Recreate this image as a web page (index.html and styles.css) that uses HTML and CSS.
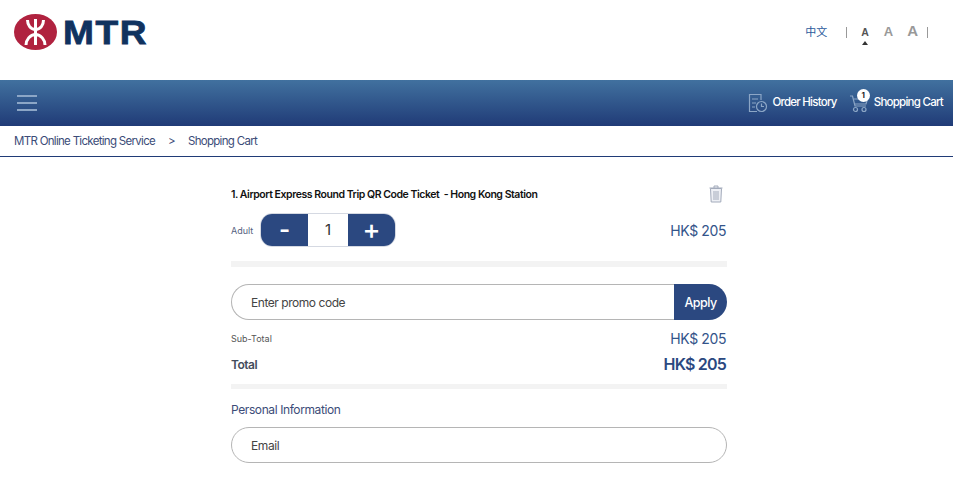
FILE: index.html
```html
<!DOCTYPE html>
<html lang="en">
<head>
<meta charset="utf-8">
<title>Shopping Cart</title>
<link rel="stylesheet" href="styles.css">
</head>
<body>
<header class="top">
  <a class="logo">
    <svg class="emblem" width="43" height="36" viewBox="0 0 43 36">
      <ellipse cx="21.500" cy="18" rx="21.500" ry="18" fill="#b0223f"/>
      <g fill="none" stroke="#fff" stroke-width="3">
        <path d="M21.500 5v26"/>
        <path d="M13.500 6c0 5 3 9.500 8 9.500s8-4.500 8-9.500"/>
        <path d="M12 31c0-5 4-10.500 9.500-10.500S31 26 31 31"/>
      </g>
    </svg>
    <span class="wordmark">MTR</span>
  </a>
  <div class="tools">
    <a class="lang">中文</a>
    <span class="sep"></span>
    <span class="size size-s">A</span>
    <span class="size size-m">A</span>
    <span class="size size-l">A</span>
    <span class="sep sep-end"></span>
  </div>
</header>
<nav class="bar">
  <div class="burger"><i></i><i></i><i></i></div>
  <div class="bar-links">
    <a class="bar-link">
      <svg width="20" height="20" viewBox="0 0 20 20" fill="none" stroke="#8ca6c6" stroke-width="1.200">
        <path d="M13 7V1.500H1.500v17H9"/>
        <path d="M4 6h6M4 10h4M4 14h3"/>
        <circle cx="13.500" cy="13.500" r="5"/>
        <path d="M13.500 10.500v3h2.500"/>
      </svg>
      <span class="bar-text">Order History</span>
    </a>
    <a class="bar-link cart">
      <svg width="20" height="20" viewBox="0 0 20 20" fill="none" stroke="#8ca6c6" stroke-width="1.200">
        <path d="M1 3h2.500l2.500 10h11"/>
        <path d="M4.500 6h14l-1.500 5H6"/>
        <circle cx="6.500" cy="16.500" r="2"/>
        <circle cx="15" cy="16.500" r="2"/>
      </svg>
      <b class="badge">1</b>
      <span class="bar-text">Shopping Cart</span>
    </a>
  </div>
</nav>
<div class="crumbs">
  <a>MTR Online Ticketing Service</a>
  <span class="gt">&gt;</span>
  <a>Shopping Cart</a>
</div>
<main class="cart-col">
  <div class="item-head">
    <h2 class="item-title">1. Airport Express Round Trip QR Code Ticket  - Hong Kong Station</h2>
    <svg class="trash" width="14" height="18" viewBox="0 0 14 18" fill="#eef0f5" stroke="#a3abbb" stroke-width="1">
      <path d="M1.500 3.500h11l-.7 13.500H2.200z"/>
      <path d="M.5 3h13M5 3V1h4v2" />
      <path d="M5 6v9M7 6v9M9 6v9" fill="none"/>
    </svg>
  </div>
  <div class="item-row">
    <span class="adult">Adult</span>
    <div class="stepper">
      <button class="step">-</button>
      <span class="qty">1</span>
      <button class="step step-plus">+</button>
    </div>
    <span class="price">HK$ 205</span>
  </div>
  <div class="rule rule-a"></div>
  <div class="promo">
    <span class="promo-text">Enter promo code</span>
    <button class="apply">Apply</button>
  </div>
  <div class="line sub">
    <span class="sub-label">Sub-Total</span>
    <span class="price">HK$ 205</span>
  </div>
  <div class="line total">
    <span class="total-label">Total</span>
    <span class="total-price">HK$ 205</span>
  </div>
  <div class="rule rule-b"></div>
  <h3 class="section">Personal Information</h3>
  <div class="field">Email</div>
</main>
</body>
</html>
```
FILE: styles.css
```css
* { box-sizing: border-box; }
html, body { margin: 0; padding: 0; height: 100%; overflow: hidden; background: #fff; }
body { font-family: Inter, "Noto Sans CJK TC", sans-serif; color: #2c4a7c; }
button { font-family: inherit; border: 0; padding: 0; }

.top { height: 80px; display: flex; justify-content: space-between; padding: 14px 25px 0 14px; }
.logo { display: flex; align-items: flex-start; }
.emblem { display: block; }
.wordmark { font-family: "Liberation Sans", sans-serif; font-weight: 700; font-size: 34px; line-height: 37px; letter-spacing: 1.500px; color: #10325f; margin-left: 6px; -webkit-text-stroke: .8px #10325f; transform: scaleX(1.090); transform-origin: left center; }

.tools { display: flex; align-items: center; height: 36px; }
.lang { font-size: 11px; color: #2c5a9c; font-family: "Noto Sans CJK TC", sans-serif; margin-right: 19px; position: relative; top: -1px; }
.sep { width: 1px; height: 11px; background: #999; }
.size { font-family: "Liberation Sans", sans-serif; font-weight: 700; color: #999; position: relative; }
.size-s { font-size: 10.500px; margin-left: 14px; color: #555; }
.size-s::after { content: ""; position: absolute; left: 1px; top: 15px; border: 3.500px solid transparent; border-top: 0; border-bottom: 4px solid #333; }
.size-m { font-size: 13px; margin-left: 15px; top: -1px; }
.size-l { font-size: 15px; margin-left: 14px; top: -2px; }
.sep-end { margin-left: 9px; }

.bar { height: 46px; background: linear-gradient(#41719f, #203b77); display: flex; justify-content: space-between; align-items: center; padding: 0 10px 0 17px; }
.burger { display: flex; flex-direction: column; gap: 5px; width: 20px; }
.burger i { display: block; height: 2px; background: #8ca6c6; }
.bar-links { display: flex; gap: 12px; }
.bar-link { display: flex; align-items: center; color: #fff; font-size: 11.500px; font-weight: 500; letter-spacing: -.75px; gap: 4px; position: relative; }
.cart { gap: 5px; }
.bar-text { padding-bottom: 2px; }
.badge { position: absolute; left: 8px; top: -4px; width: 13px; height: 13px; border-radius: 50%; background: #fff; color: #222; font-size: 8px; letter-spacing: 0; line-height: 13px; text-align: center; font-weight: 700; }

.crumbs { height: 31px; border-bottom: 1px solid #203b77; display: flex; align-items: center; padding: 0 14px; font-size: 11.500px; letter-spacing: -.7px; color: #3c4c78; }
.gt { margin: 0 13px 0 13px; }

.cart-col { width: 496px; margin: 0 0 0 231px; }
.item-head { display: flex; justify-content: space-between; align-items: center; height: 18px; margin-top: 28px; padding-right: 4px; }
.item-title { margin: 0; font-size: 10.500px; font-weight: 600; color: #111; letter-spacing: -.45px; white-space: pre; }
.item-row { display: flex; align-items: center; height: 34px; margin-top: 10px; }
.adult { font-size: 9px; color: #555f80; width: 29px; }
.stepper { display: flex; height: 34px; width: 136px; border: 1px solid #d5d9e2; border-radius: 12px; overflow: hidden; }
.step { width: 47px; background: #2b4880; color: #fff; font-size: 24px; font-weight: 600; line-height: 30px; }
.step-plus { font-size: 27px; font-weight: 500; }
.qty { flex: 1; text-align: center; font-size: 15px; line-height: 32px; color: #333; }
.price { margin-left: auto; margin-right: 1px; font-size: 14px; letter-spacing: -.4px; color: #33548a; }
.rule { height: 5px; background: #f3f3f3; }
.rule-a { margin-top: 14px; height: 6px; }
.promo { display: flex; height: 36px; margin-top: 17px; }
.promo-text { flex: 1; padding-left: 19px; font-size: 12px; letter-spacing: -.45px; line-height: 36px; color: #444; border: 1px solid #b5b5b5; border-right: 0; border-radius: 18px 0 0 18px; }
.apply { width: 53px; height: 36px; background: #2b4880; color: #fff; font-size: 12.500px; font-weight: 500; letter-spacing: -.5px; border-radius: 0 18px 18px 0; }
.line { display: flex; align-items: center; }
.sub { height: 18px; margin-top: 9px; }
.sub-label { font-size: 9px; color: #555; }
.total { height: 20px; margin-top: 7px; }
.total-label { font-size: 12px; font-weight: 600; letter-spacing: -.5px; color: #444c5c; }
.total-price { margin-left: auto; margin-right: 1px; font-size: 16px; font-weight: 600; letter-spacing: -.8px; color: #2b4880; }
.rule-b { margin-top: 10px; }
.section { margin: 13px 0 0; font-size: 12px; line-height: 15px; font-weight: 400; letter-spacing: -.4px; color: #3c4c78; }
.field { height: 36px; margin-top: 10px; border: 1px solid #b5b5b5; border-radius: 18px; padding-left: 19px; font-size: 12px; letter-spacing: -.4px; line-height: 36px; color: #444; }
```
